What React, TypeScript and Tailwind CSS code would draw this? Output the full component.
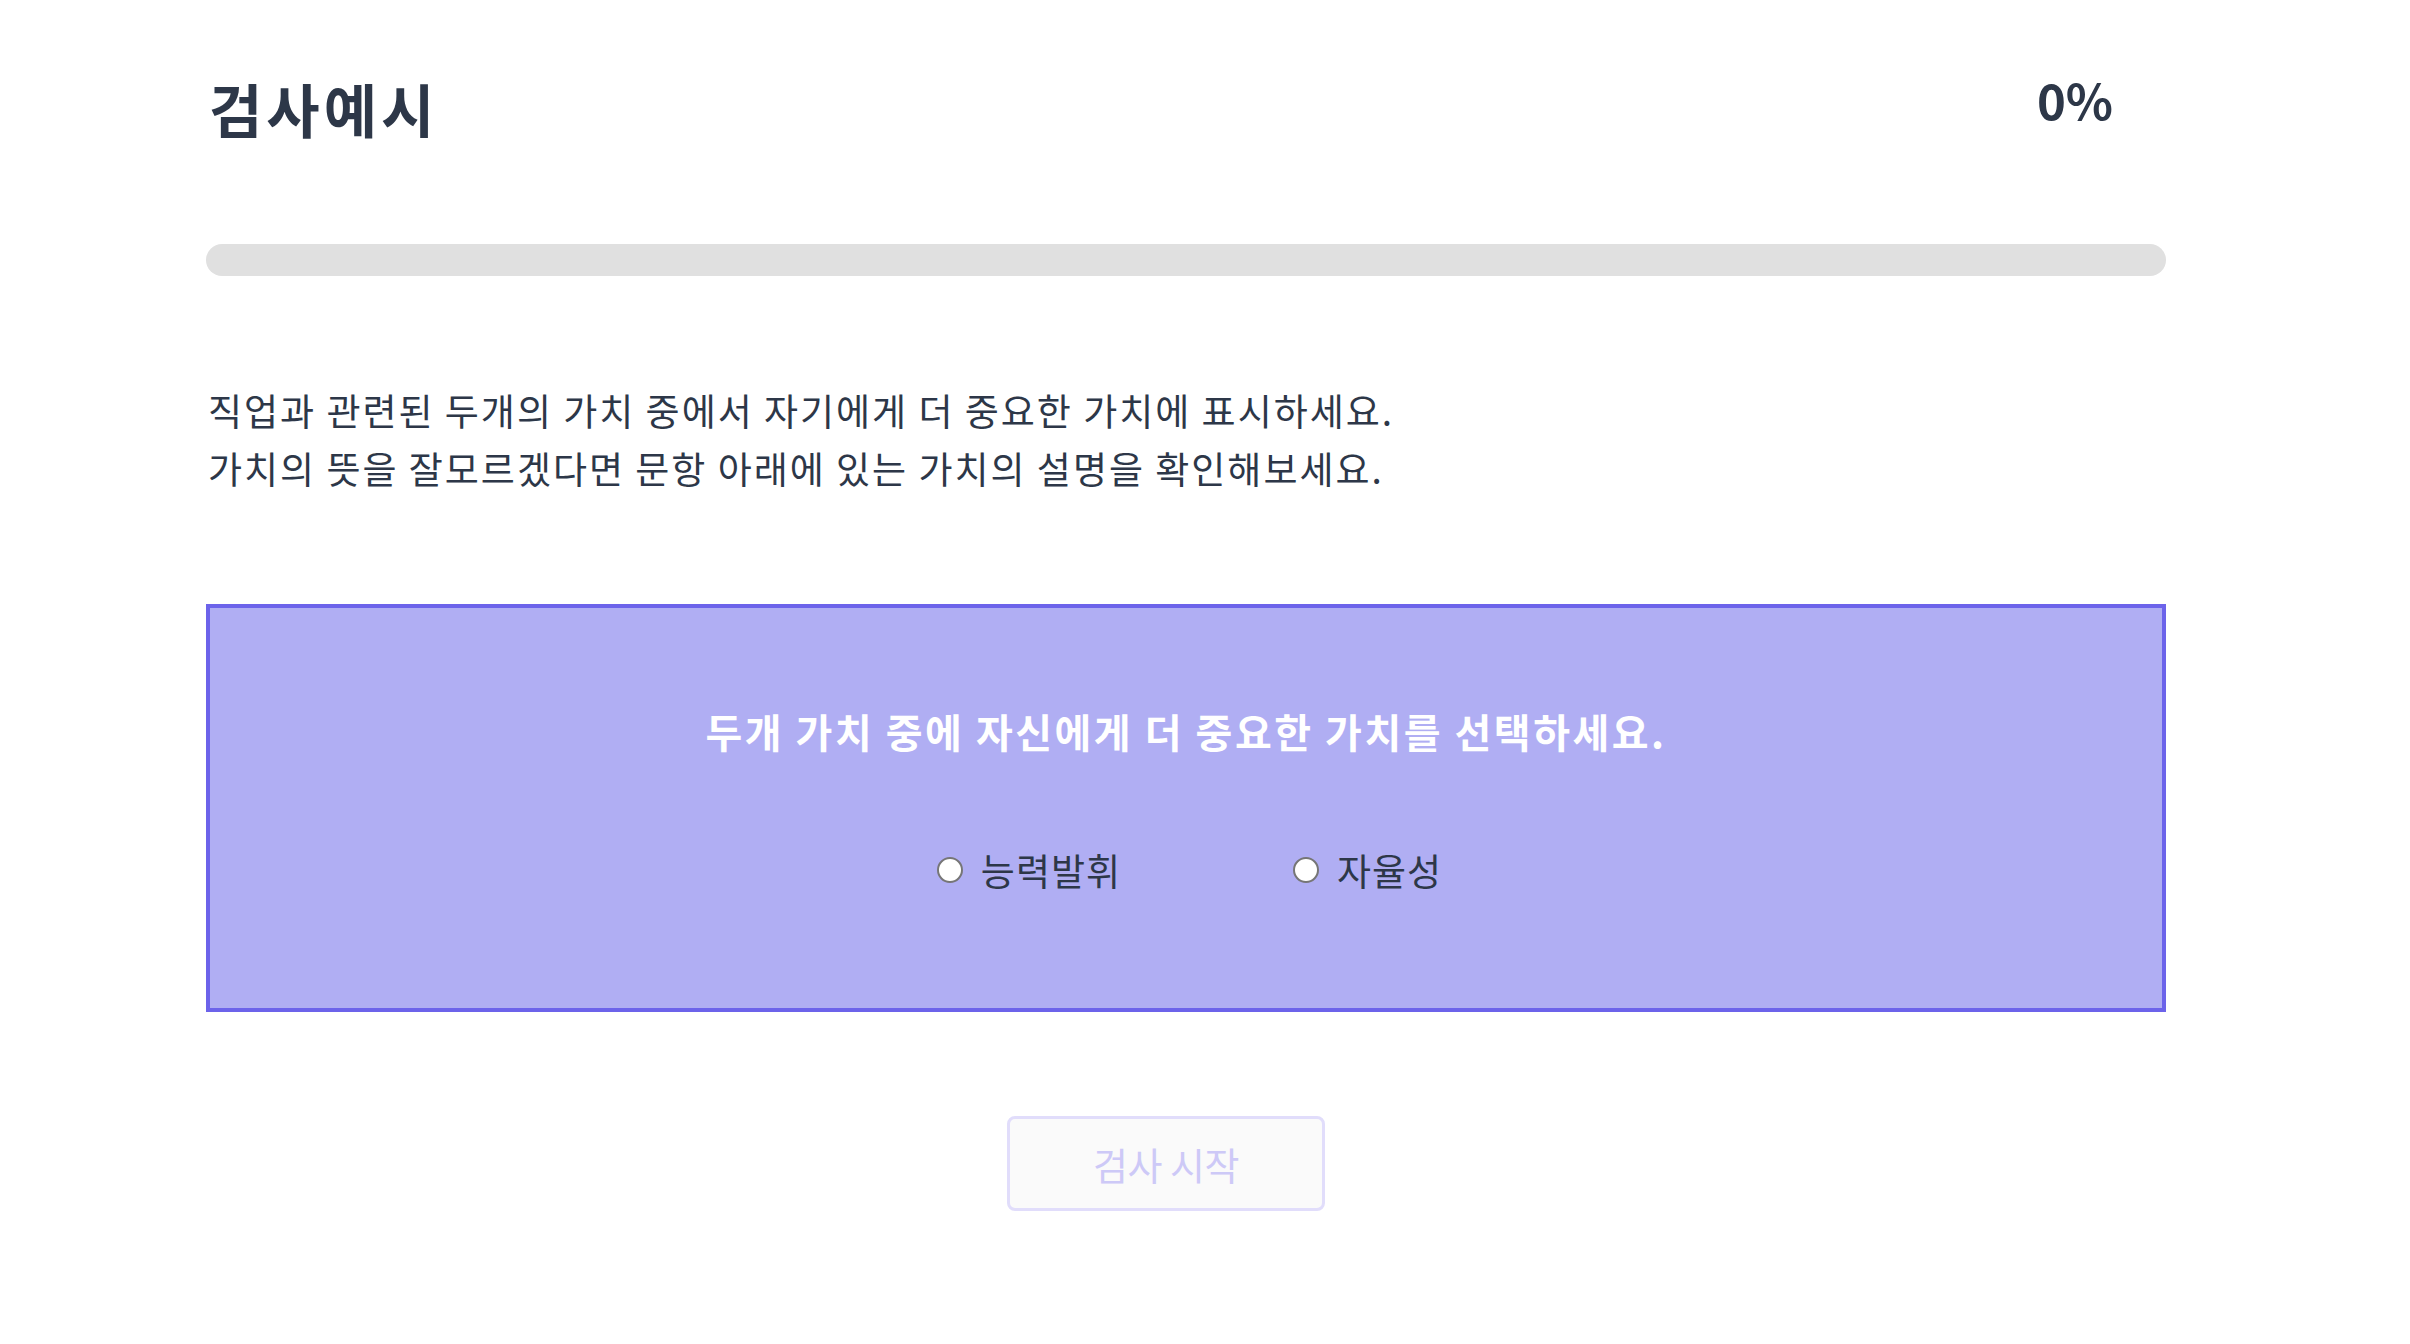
import { useState } from "react";

const FONT = "font-['Noto_Sans_CJK_KR','Noto_Sans',sans-serif]";

const OPTIONS = ["능력발휘", "자율성"];

export default function App() {
  const [picked, setPicked] = useState<string | null>(null);
  const progress = 0;

  return (
    <div className={`min-h-screen bg-white text-[#2d3748] ${FONT}`}>
      <div className="ml-[206px] w-[1960px] pt-[72px]">
        {/* header */}
        <div className="flex items-start justify-between">
          <h1 className="pl-[3px] text-[58px] font-bold leading-[72px] tracking-[4px]">검사예시</h1>
          <span className="pr-[53px] pt-[1px] text-[49px] font-bold leading-[52px]">{progress}%</span>
        </div>

        {/* progress bar */}
        <div className="mt-[100px] h-[32px] w-full overflow-hidden rounded-full bg-[#e0e0e0]">
          <div className="h-full rounded-full bg-[#6c63ea]" style={{ width: `${progress}%` }} />
        </div>

        {/* guide */}
        <div className="mt-[105px] pl-[2px] text-[37px] leading-[58px] tracking-[2px]">
          <p>직업과 관련된 두개의 가치 중에서 자기에게 더 중요한 가치에 표시하세요.</p>
          <p>가치의 뜻을 잘모르겠다면 문항 아래에 있는 가치의 설명을 확인해보세요.</p>
        </div>

        {/* question card */}
        <div className="mt-[107px] border-4 border-[#6c63ea] bg-[#b0aef3] pb-[109px] pt-[93px]">
          <p className="text-center text-[40px] font-bold leading-[60px] text-white tracking-[2.5px]">
            두개 가치 중에 자신에게 더 중요한 가치를 선택하세요.
          </p>
          <div className="mt-[80px] flex items-center justify-center gap-[172px] pl-[7px]">
            {OPTIONS.map((o) => (
              <label key={o} className="flex cursor-pointer items-center gap-[18px]">
                <input
                  type="radio"
                  name="value"
                  checked={picked === o}
                  onChange={() => setPicked(o)}
                  className="h-[26px] w-[26px] cursor-pointer appearance-none rounded-full border-2 border-[#767676] bg-white checked:border-[8px] checked:border-[#6c63ea]"
                />
                <span className="text-[37px] leading-[58px] tracking-[1px]">{o}</span>
              </label>
            ))}
          </div>
        </div>

        {/* start */}
        <button
          type="button"
          disabled={!picked}
          className="ml-[801px] mt-[104px] flex h-[95px] w-[318px] items-center justify-center rounded-[8px] border-[3px] border-[#e1ddfb] bg-[#fafafa] text-[38px] text-[#cdc9f7] tracking-[-0.5px] enabled:border-[#6c63ea] enabled:bg-[#6c63ea] enabled:text-white"
        >
          검사 시작
        </button>
      </div>
    </div>
  );
}
